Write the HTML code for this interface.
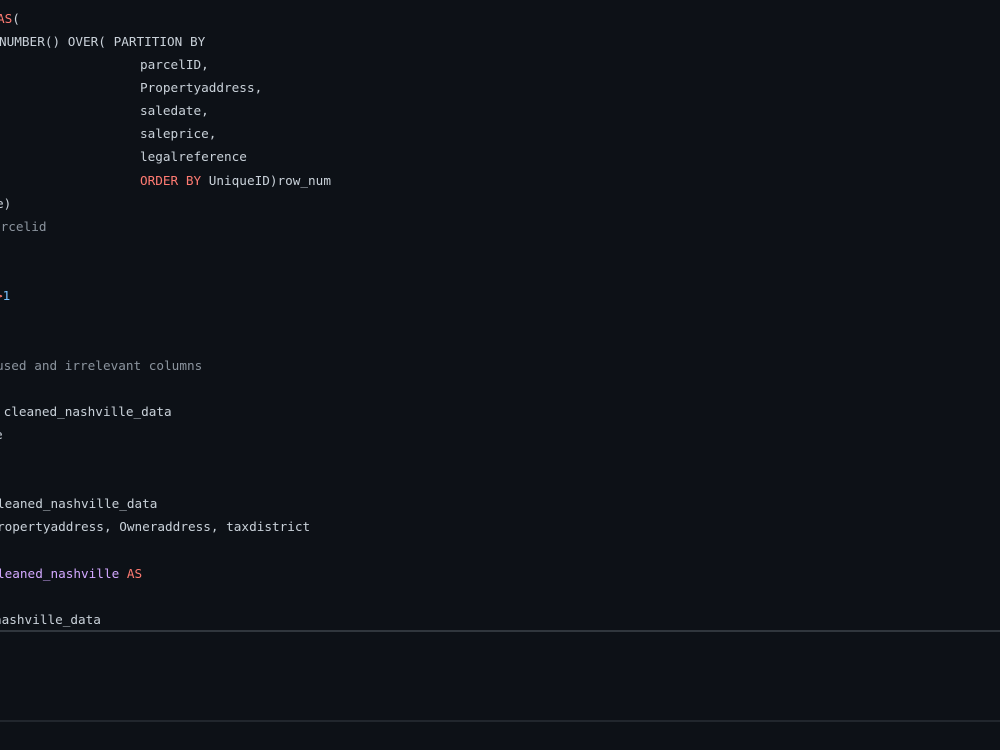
<!DOCTYPE html>
<html><head><meta charset="utf-8"><style>
html,body{margin:0;padding:0;width:1000px;height:750px;overflow:hidden;background:#0d1117;}
.l{position:absolute;white-space:pre;font-family:"DejaVu Sans Mono","Liberation Mono",monospace;font-size:12.7px;line-height:20px;color:#c9d1d9;}
.k{color:#ff7b72}.c{color:#8b949e}.p{color:#d2a8ff}.n{color:#79c0ff}
.hr{position:absolute;left:0;width:1000px;height:2px;}
</style></head><body>
<div class="l" style="top:9px;left:-3px"><span class="k">AS</span>(</div>
<div class="l" style="top:32px;left:-1px">NUMBER() OVER( PARTITION BY</div>
<div class="l" style="top:55px;left:140px">parcelID,</div>
<div class="l" style="top:78px;left:140px">Propertyaddress,</div>
<div class="l" style="top:101px;left:140px">saledate,</div>
<div class="l" style="top:124px;left:140px">saleprice,</div>
<div class="l" style="top:147px;left:140px">legalreference</div>
<div class="l" style="top:171px;left:140px"><span class="k">ORDER BY</span> UniqueID)row_num</div>
<div class="l" style="top:194px;left:-4px">e)</div>
<div class="l" style="top:217px;left:-7px"><span class="c">arcelid</span></div>
<div class="l" style="top:286px;left:-5px"><span class="k">&gt;</span><span class="n">1</span></div>
<div class="l" style="top:356px;left:-4px"><span class="c">used and irrelevant columns</span></div>
<div class="l" style="top:402px;left:-4px"> cleaned_nashville_data</div>
<div class="l" style="top:425px;left:-5px">e</div>
<div class="l" style="top:494px;left:-3px">leaned_nashville_data</div>
<div class="l" style="top:517px;left:-3px">ropertyaddress, Owneraddress, taxdistrict</div>
<div class="l" style="top:564px;left:-3px"><span class="p">leaned_nashville</span> <span class="k">AS</span></div>
<div class="l" style="top:610px;left:-6px">nashville_data</div>
<div class="hr" style="top:630px;background:#30363d"></div>
<div class="hr" style="top:720px;background:#21262d"></div>
</body></html>
